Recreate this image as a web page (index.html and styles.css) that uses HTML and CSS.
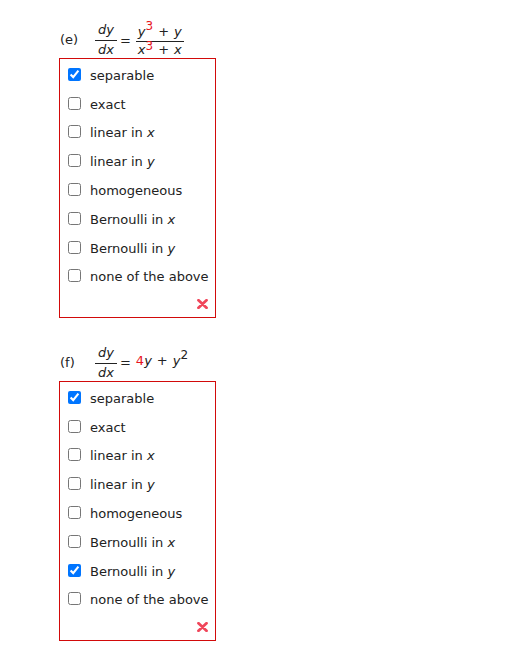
FILE: index.html
```html
<!DOCTYPE html>
<html>
<head>
<meta charset="utf-8">
<link rel="stylesheet" href="styles.css">
</head>
<body>
<div class="page">
  <div class="item item-e">
    <div class="head">
      <span class="label">(e)</span>
      <span class="eq">
        <span class="frac"><span class="num"><i>dy</i></span><span class="den"><i>dx</i></span></span>
        <span class="eqs">=</span>
        <span class="frac wide"><span class="num"><i>y</i><span class="sup red">3</span><span class="op">+</span><i>y</i></span><span class="den"><i>x</i><span class="sup red">3</span><span class="op">+</span><i>x</i></span></span>
      </span>
    </div>
    <div class="box">
      <label class="row"><input type="checkbox" checked><span>separable</span></label>
      <label class="row"><input type="checkbox"><span>exact</span></label>
      <label class="row"><input type="checkbox"><span>linear in <i>x</i></span></label>
      <label class="row"><input type="checkbox"><span>linear in <i>y</i></span></label>
      <label class="row"><input type="checkbox"><span>homogeneous</span></label>
      <label class="row"><input type="checkbox"><span>Bernoulli in <i>x</i></span></label>
      <label class="row"><input type="checkbox"><span>Bernoulli in <i>y</i></span></label>
      <label class="row"><input type="checkbox"><span>none of the above</span></label>
      <div class="mark"><svg width="11" height="10" viewBox="0 0 11 10"><path d="M1.5 1.3 L9.5 8.7 M9.5 1.3 L1.5 8.7" stroke="#f0465a" stroke-width="2.8" stroke-linecap="round"/></svg></div>
    </div>
  </div>

  <div class="item item-f">
    <div class="head">
      <span class="label">(f)</span>
      <span class="eq">
        <span class="frac"><span class="num"><i>dy</i></span><span class="den"><i>dx</i></span></span>
        <span class="eqs">=</span>
        <span class="expr"><span class="red">4</span><i>y</i><span class="op">+</span><i>y</i><span class="sup">2</span></span>
      </span>
    </div>
    <div class="box">
      <label class="row"><input type="checkbox" checked><span>separable</span></label>
      <label class="row"><input type="checkbox"><span>exact</span></label>
      <label class="row"><input type="checkbox"><span>linear in <i>x</i></span></label>
      <label class="row"><input type="checkbox"><span>linear in <i>y</i></span></label>
      <label class="row"><input type="checkbox"><span>homogeneous</span></label>
      <label class="row"><input type="checkbox"><span>Bernoulli in <i>x</i></span></label>
      <label class="row"><input type="checkbox" checked><span>Bernoulli in <i>y</i></span></label>
      <label class="row"><input type="checkbox"><span>none of the above</span></label>
      <div class="mark"><svg width="11" height="10" viewBox="0 0 11 10"><path d="M1.5 1.3 L9.5 8.7 M9.5 1.3 L1.5 8.7" stroke="#f0465a" stroke-width="2.8" stroke-linecap="round"/></svg></div>
    </div>
  </div>
</div>
</body>
</html>
```

FILE: styles.css
```css
html, body {
  margin: 0;
  padding: 0;
  background: #fff;
}
body {
  font-family: "DejaVu Sans", Verdana, sans-serif;
  font-size: 13px;
  color: #222;
}
.page {
  padding: 22px 0 0 59px;
}
.item-f {
  margin-top: 27px;
}
.head {
  display: flex;
  align-items: center;
}
.label {
  width: 36px;
  padding-left: 1px;
  padding-bottom: 1px;
  box-sizing: border-box;
}
.eq {
  display: flex;
  align-items: center;
  font-size: 13px;
}
.frac {
  display: inline-flex;
  flex-direction: column;
  align-items: stretch;
  text-align: center;
}
.num, .den {
  line-height: 16px;
  padding: 0 3px;
  white-space: nowrap;
}
.num {
  border-bottom: 1px solid #222;
  padding-bottom: 2px;
}
.den {
  padding-top: 1px;
}
.frac.wide .num, .frac.wide .den {
  padding-left: 2px;
  padding-right: 2px;
}
.frac.wide .num {
  padding-bottom: 1px;
}
.frac.wide .den {
  padding-top: 0;
}
.eqs {
  margin: 0 5px 0 3px;
}
.op {
  margin: 0 5px;
}
.sup {
  font-size: 12px;
  line-height: 8px;
  vertical-align: 6px;
}
.den .sup {
  vertical-align: 4px;
}
.red {
  color: #e8141c;
}
.expr {
  line-height: 16px;
  padding-bottom: 6px;
}
.box {
  width: 157px;
  box-sizing: border-box;
  border: 1px solid #d20a0a;
  padding: 1px 7px 0 8px;
}
.row {
  display: flex;
  align-items: center;
  height: 28.8px;
}
.row input {
  margin: 0;
  width: 13px;
  height: 13px;
  flex: none;
}
.row span {
  margin-left: 9px;
  padding-top: 2px;
  white-space: nowrap;
}
.mark {
  display: flex;
  justify-content: flex-end;
  align-items: center;
  height: 26.6px;
}
.mark svg {
  display: block;
}
```
